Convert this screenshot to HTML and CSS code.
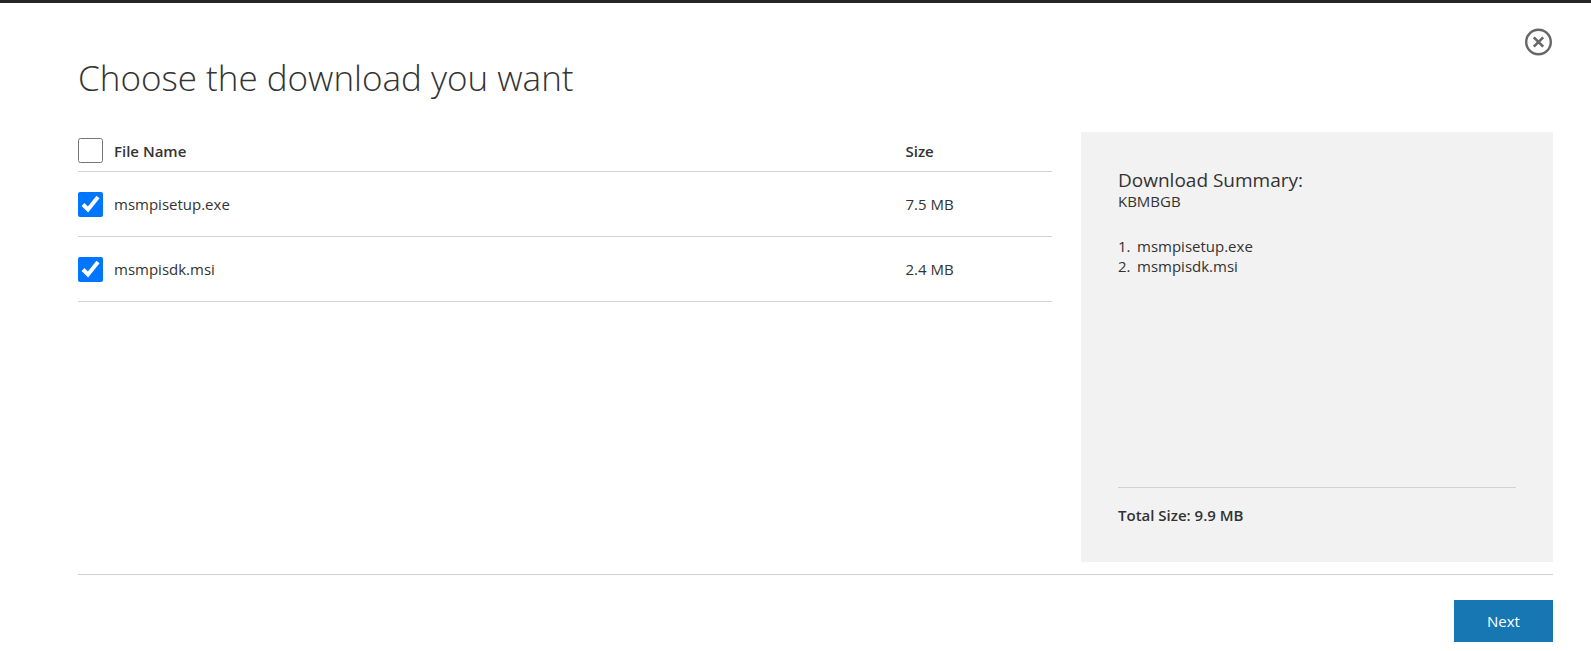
FILE: index.html
```
<!DOCTYPE html>
<html lang="en">
<head>
    <meta charset="UTF-8">
    <meta name="viewport" content="width=device-width, initial-scale=1.0">
    <title>Choose the download you want</title>

    <link rel="stylesheet" href="styles.css">

</head>
<body>
    <div class="dialog">
        <div class="top">
            <h1>Choose the download you want</h1>
            <button type="button" class="close" aria-label="Close">
                <svg width="28" height="28" viewBox="0 0 28 28" fill="none" stroke="#666">
                    <circle cx="13.5" cy="14" r="12.3" stroke-width="2.4"/>
                    <path d="M8.8 9.3l9.4 9.4M18.2 9.3l-9.4 9.4" stroke-width="2.6"/>
                </svg>
            </button>
        </div>

        <div class="content">
            <table class="files">
                <thead>
                    <tr>
                        <th class="name"><div class="cell"><input type="checkbox" id="all"><label for="all">File Name</label></div></th>
                        <th class="size">Size</th>
                    </tr>
                </thead>
                <tbody>
                    <tr>
                        <td><div class="cell"><input type="checkbox" id="file1" checked><label for="file1">msmpisetup.exe</label></div></td>
                        <td>7.5 MB</td>
                    </tr>
                    <tr>
                        <td><div class="cell"><input type="checkbox" id="file2" checked><label for="file2">msmpisdk.msi</label></div></td>
                        <td>2.4 MB</td>
                    </tr>
                </tbody>
            </table>

            <div class="summary">
                <h2>Download Summary:</h2>
                <p>KBMBGB</p>
                <ol>
                    <li>msmpisetup.exe</li>
                    <li>msmpisdk.msi</li>
                </ol>
                <div class="total">Total Size: 9.9 MB</div>
            </div>
        </div>

        <div class="bottom">
            <button type="button" class="next">Next</button>
        </div>
    </div>
</body>
</html>
```
FILE: styles.css
```
*{
    margin: 0;
    padding: 0;
    box-sizing: border-box;
}

body{
    border-top: 3px solid #262626;
    background: #fff;
    color: #333;
    font-family: 'Segoe UI', 'Open Sans', sans-serif;
    font-size: 15px;
    line-height: 20px;
}

.dialog{
    padding: 25px 38px 0 78px;
}

.top{
    display: flex;
    justify-content: space-between;
    align-items: flex-start;
    height: 104px;
}

h1{
    margin-top: 26px;
    font-size: 35px;
    line-height: 48px;
    font-weight: 300;
}

.close{
    width: 28px;
    height: 28px;
    border: 0;
    background: none;
}

.close svg{
    display: block;
}

.content{
    display: flex;
    justify-content: space-between;
    align-items: flex-start;
}

.files{
    width: 66%;
    border-spacing: 0;
    text-align: left;
}

.files th{
    height: 40px;
    padding-bottom: 2px;
    border-bottom: 1px solid #d2d2d2;
    font-weight: 600;
}

.files td{
    height: 65px;
    border-bottom: 1px solid #d2d2d2;
}

.files .size{
    width: 15%;
}

.cell{
    display: flex;
    align-items: center;
    gap: 11px;
}

.cell input{
    width: 25px;
    height: 25px;
}

.summary{
    display: flex;
    flex-direction: column;
    width: 32%;
    min-height: 430px;
    padding: 36px 37px;
    background: #f2f2f2;
}

.summary h2{
    font-size: 19px;
    line-height: 24px;
    font-weight: 400;
}

.summary p{
    line-height: 18px;
}

.summary ol{
    margin-top: 26px;
    list-style: none;
    counter-reset: file;
}

.summary li{
    display: flex;
    counter-increment: file;
}

.summary li::before{
    content: counter(file) '.';
    width: 19px;
}

.total{
    margin-top: auto;
    padding-top: 17px;
    padding-bottom: 1px;
    border-top: 1px solid #d2d2d2;
    font-weight: 600;
}

.bottom{
    display: flex;
    justify-content: flex-end;
    margin-top: 12px;
    padding-top: 25px;
    border-top: 1px solid #d2d2d2;
}

.next{
    width: 99px;
    height: 42px;
    border: 0;
    background: #1777b2;
    color: #fff;
    font: inherit;
}
```
